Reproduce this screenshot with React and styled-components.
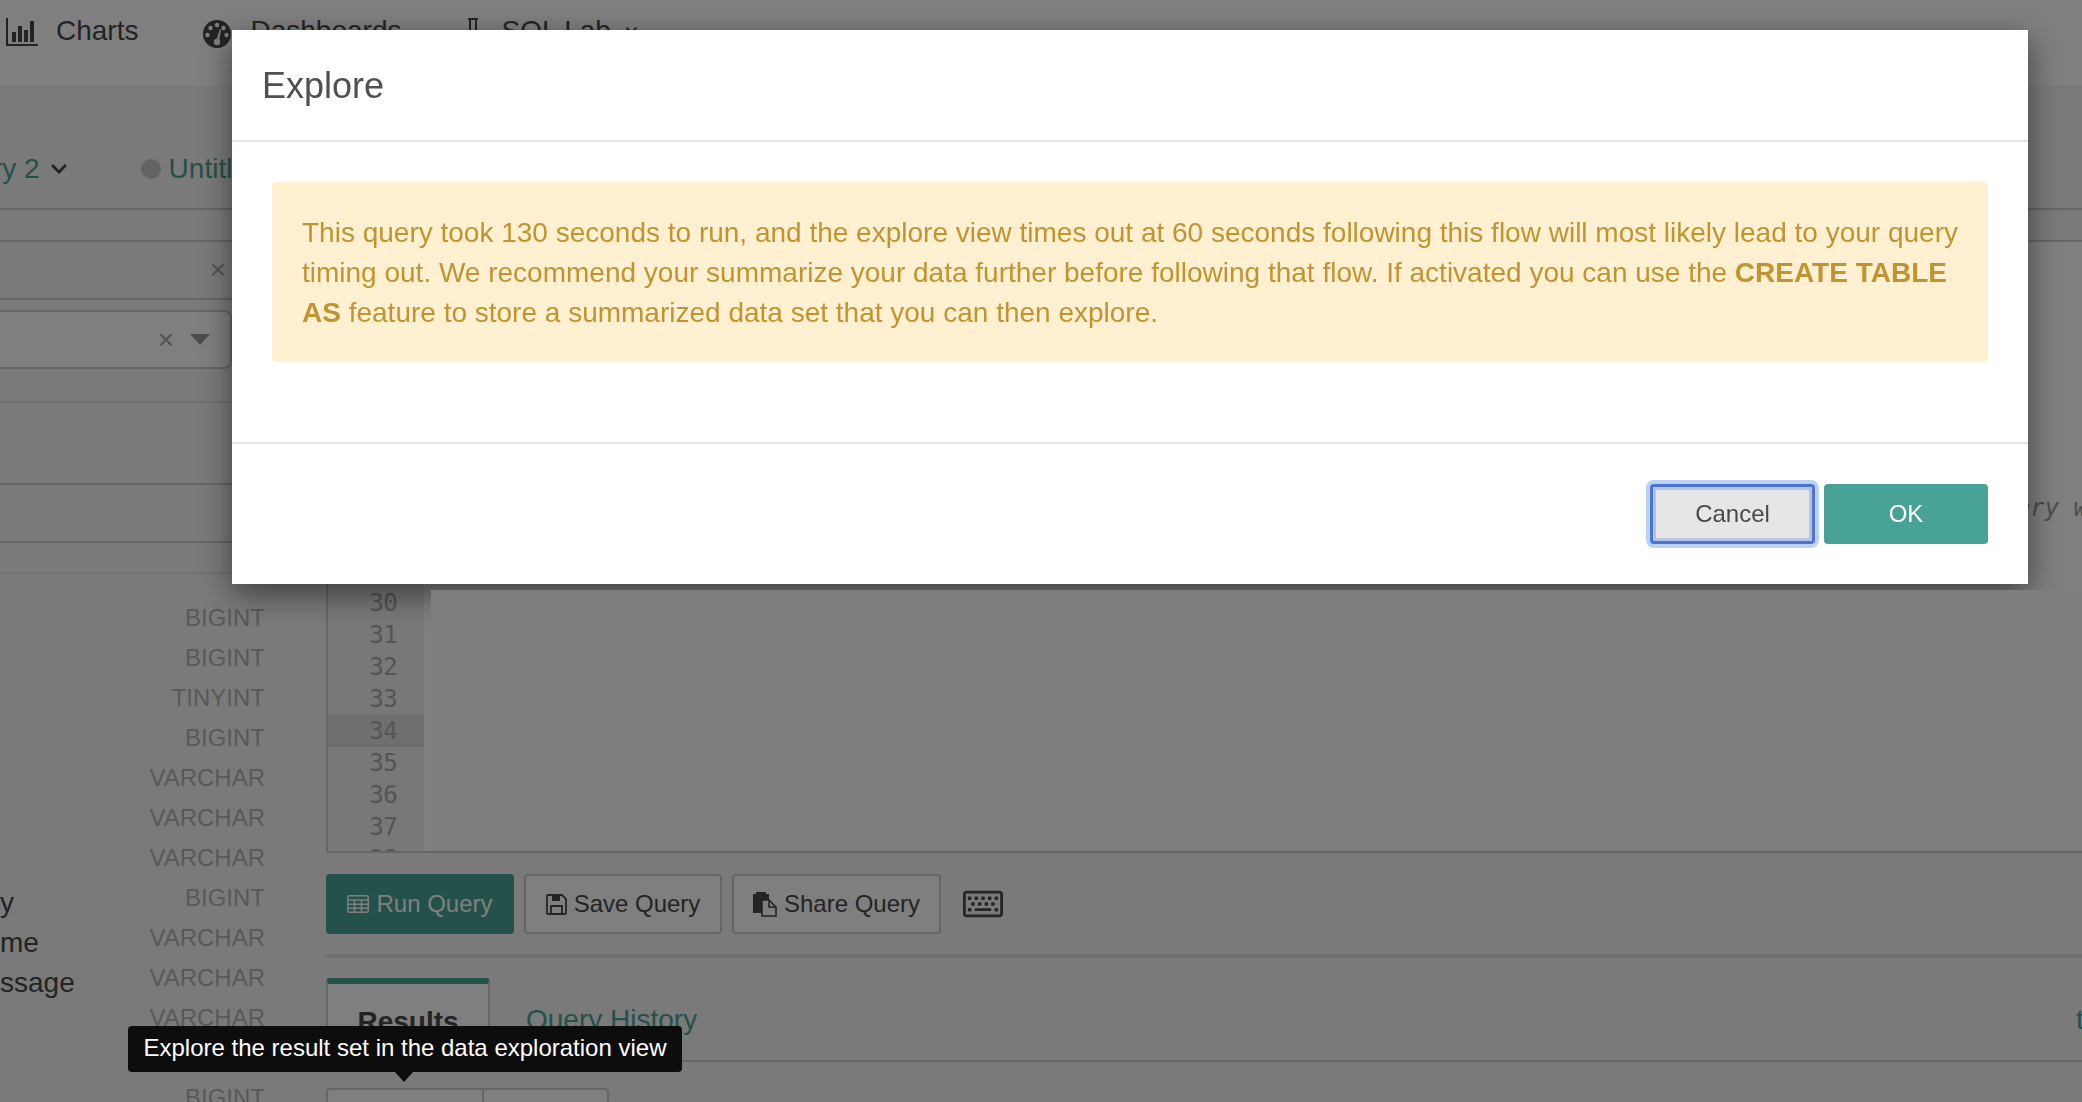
import React from "react";
import styled, { createGlobalStyle } from "styled-components";
import { FaRegKeyboard, FaChevronDown } from "react-icons/fa";

const GlobalStyle = createGlobalStyle`
  html, body {
    margin: 0;
    padding: 0;
    height: 100%;
    overflow: hidden;
    background: #fff;
    font-family: "Liberation Sans", Arial, sans-serif;
    color: #484848;
  }
  * { box-sizing: border-box; }
`;

const teal = "#48a295";

const Page = styled.div`
  width: 2082px;
  height: 1102px;
  overflow: hidden;
  display: flex;
  flex-direction: column;
  background: #fff;
`;

const Nav = styled.nav`
  height: 86px;
  flex: none;
  display: flex;
  background: #fff;
  padding: 15px 0 0 6px;
  font-size: 28px;
`;

const NavItem = styled.div`
  display: flex;
  align-items: flex-start;
  gap: ${(p) => p.$inner}px;
  margin-right: ${(p) => p.$gap}px;
  line-height: 32px;
  color: #484848;
  svg { flex: none; }
`;

const NavChevron = styled(FaChevronDown)`
  font-size: 13px;
  margin: 9px 0 0 -2px;
`;

const TabBar = styled.div`
  height: 124px;
  flex: none;
  display: flex;
  align-items: center;
  background: #f5f5f5;
  border-bottom: 2px solid #ccc;
  font-size: 28px;
  color: ${teal};
  padding-top: 44px;
`;

const QueryTab = styled.div`
  display: flex;
  align-items: center;
  gap: 10px;
  margin-right: ${(p) => p.$right || 0}px;
  margin-left: ${(p) => p.$shift || 0}px;
  white-space: nowrap;
  svg { font-size: 18px; color: #484848; }
`;

const Dot = styled.span`
  width: 20px;
  height: 20px;
  flex: none;
  border-radius: 50%;
  background: #c8c8c8;
`;

const Body = styled.div`
  flex: 1;
  display: flex;
  min-height: 0;
  background: #f5f5f5;
`;

const Sidebar = styled.aside`
  width: 326px;
  flex: none;
  display: flex;
  flex-direction: column;
`;

const FieldLine = styled.div`
  height: ${(p) => p.$h}px;
  flex: none;
  border-bottom: 2px solid ${(p) => (p.$faint ? "#e2e2e2" : "#ccc")};
  display: flex;
  align-items: center;
  justify-content: flex-end;
  padding-right: 100px;
  color: #a8a8a8;
  font-size: 28px;
`;

const SelectBox = styled.div`
  width: 232px;
  height: 59px;
  flex: none;
  margin-top: 10px;
  border: 2px solid #ccc;
  border-left: 0;
  border-radius: 0 8px 8px 0;
  background: #fff;
  display: flex;
  align-items: center;
  justify-content: flex-end;
  gap: 16px;
  padding-right: 20px;
  color: #a8a8a8;
  font-size: 28px;
`;

const Caret = styled.span`
  width: 0;
  height: 0;
  border-style: solid;
  border-width: 11px 10px 0;
  border-color: #999 transparent transparent;
`;

const ColumnGrid = styled.div`
  display: grid;
  grid-template-columns: 265px;
  grid-auto-rows: 40px;
  margin-top: 24px;
`;

const ColumnRow = styled.div`
  display: flex;
  justify-content: space-between;
  align-items: center;
  white-space: nowrap;
`;

const ColumnName = styled.span`
  font-size: 28px;
  color: #484848;
  position: relative;
  top: 5px;
`;

const ColumnType = styled.span`
  font-size: 24px;
  color: #b3b3b3;
`;

const Main = styled.main`
  flex: 1;
  min-width: 0;
  display: flex;
  flex-direction: column;
`;

const Editor = styled.div`
  height: 613px;
  flex: none;
  margin-top: 30px;
  border: 2px solid #ccc;
  border-right: 0;
  background: #fff;
  display: flex;
  overflow: hidden;
  position: relative;
`;

const Gutter = styled.div`
  width: 96px;
  flex: none;
  background: #f0f0f0;
  padding-top: 345px;
`;

const LineNumber = styled.div`
  height: 32px;
  line-height: 32px;
  text-align: right;
  padding-right: 27px;
  font-family: "DejaVu Sans Mono", monospace;
  font-size: 24px;
  letter-spacing: -0.6px;
  color: #aaa;
  background: ${(p) => (p.$active ? "#dedede" : "transparent")};
`;

const Comment = styled.span`
  position: absolute;
  right: -6px;
  top: 252px;
  font-family: "DejaVu Sans Mono", monospace;
  font-style: italic;
  font-size: 24px;
  color: #999;
  white-space: nowrap;
`;

const Toolbar = styled.div`
  height: 60px;
  flex: none;
  margin-top: 21px;
  display: flex;
  align-items: center;
  gap: 10px;
`;

const ToolButton = styled.button`
  height: 60px;
  width: ${(p) => p.$w}px;
  flex: none;
  border: 2px solid ${(p) => (p.$primary ? teal : "#ccc")};
  border-radius: 4px;
  background: ${(p) => (p.$primary ? teal : "#fff")};
  color: ${(p) => (p.$primary ? "#fff" : "#484848")};
  font: 24px "Liberation Sans", Arial, sans-serif;
  display: flex;
  align-items: center;
  justify-content: center;
  gap: 7px;
  padding: 0;
`;

const KeyboardIcon = styled(FaRegKeyboard)`
  font-size: 40px;
  color: #484848;
  margin-left: 12px;
`;

const HeavyRule = styled.div`
  height: 4px;
  flex: none;
  margin-top: 20px;
  background: #e0e0e0;
`;

const ResultTabs = styled.div`
  height: 84px;
  flex: none;
  margin-top: 20px;
  display: flex;
  justify-content: space-between;
  border-bottom: 2px solid #ccc;
`;

const ResultTabGroup = styled.div`
  display: flex;
  gap: 36px;
`;

const ActiveTab = styled.div`
  width: 164px;
  height: 84px;
  border: 2px solid #ccc;
  border-top: 6px solid ${teal};
  border-bottom: 0;
  border-radius: 4px 4px 0 0;
  background: #fff;
  text-align: center;
  padding-top: 22px;
  font-size: 28px;
  font-weight: bold;
  color: #484848;
`;

const TabLink = styled.div`
  font-size: 28px;
  line-height: 32px;
  color: ${teal};
  padding-top: 26px;
  white-space: nowrap;
  overflow: hidden;
`;

const ClippedLink = styled(TabLink)`
  width: 6px;
`;

const ResultButtons = styled.div`
  display: flex;
  width: 283px;
  height: 30px;
  margin-top: 26px;
  border: 2px solid #ccc;
  border-bottom: 0;
  border-radius: 4px 4px 0 0;
  background: #fff;
`;

const ResultButton = styled.div`
  width: 156px;
  border-right: 2px solid #ccc;
`;

const Backdrop = styled.div`
  position: fixed;
  inset: 0;
  background: rgba(0, 0, 0, 0.5);
`;

const Modal = styled.div`
  position: fixed;
  left: 232px;
  top: 30px;
  width: 1796px;
  height: 554px;
  background: #fff;
  box-shadow: 0 10px 30px rgba(0, 0, 0, 0.5);
  display: flex;
  flex-direction: column;
`;

/* the editor text layer paints over the modal shadow in the reference */
const ShadowPatch = styled.div`
  position: fixed;
  left: 431px;
  right: 0;
  top: 590px;
  height: 260px;
  background: #7e7e7e;
`;

const ModalHeader = styled.header`
  height: 112px;
  flex: none;
  padding: 2px 30px 0;
  border-bottom: 2px solid #e5e5e5;
  display: flex;
  align-items: center;
`;

const ModalTitle = styled.h4`
  margin: 0;
  font-size: 36px;
  font-weight: normal;
  color: #505050;
`;

const ModalBody = styled.div`
  flex: 1;
  padding: 40px;
`;

const Alert = styled.div`
  height: 180px;
  padding: 31px 30px 0;
  border-radius: 4px;
  background: #fef0d0;
  color: #c29431;
  font-size: 28px;
  line-height: 40px;
`;

const ModalFooter = styled.footer`
  height: 142px;
  flex: none;
  padding: 40px;
  border-top: 2px solid #e5e5e5;
  display: flex;
  justify-content: flex-end;
  gap: 9px;
`;

const CancelButton = styled.button`
  width: 165px;
  height: 60px;
  border: 3px solid #4a76cf;
  box-shadow: 0 0 0 4px #bcd0f8, inset 0 0 0 3px #b4c4e4;
  border-radius: 4px;
  background: #e6e6e6;
  color: #484848;
  font: 24px "Liberation Sans", Arial, sans-serif;
  padding: 0;
`;

const OkButton = styled.button`
  width: 164px;
  height: 60px;
  border: 0;
  border-radius: 4px;
  background: ${teal};
  color: #fff;
  font: 24px "Liberation Sans", Arial, sans-serif;
  padding: 0;
`;

const Tooltip = styled.div`
  position: fixed;
  left: 128px;
  top: 1026px;
  width: 554px;
  height: 46px;
  background: #0d0d0d;
  border-radius: 4px;
  color: #fff;
  font-size: 24px;
  line-height: 44px;
  text-align: center;
  white-space: nowrap;

  &::after {
    content: "";
    position: absolute;
    left: 267px;
    top: 46px;
    border-style: solid;
    border-width: 10px 9px 0;
    border-color: #0d0d0d transparent transparent;
  }
`;

function ChartIcon() {
  return (
    <svg width="32" height="28" viewBox="0 0 32 28" style={{ marginTop: 3 }} fill="currentColor">
      <rect x="0" y="0" width="2" height="28" />
      <rect x="0" y="26" width="32" height="2" />
      <rect x="6" y="14" width="4" height="10" />
      <rect x="12" y="8" width="4" height="16" />
      <rect x="18" y="12" width="4" height="12" />
      <rect x="24" y="3" width="4" height="21" />
    </svg>
  );
}

function DashboardIcon() {
  return (
    <svg width="28" height="28" viewBox="0 0 28 28" style={{ marginTop: 5 }}>
      <circle cx="14" cy="14" r="14" fill="currentColor" />
      <g fill="#fff">
        <circle cx="14" cy="5" r="2.2" />
        <circle cx="7.5" cy="8" r="2.2" />
        <circle cx="20.5" cy="8" r="2.2" />
        <circle cx="4.5" cy="15" r="2.2" />
        <circle cx="23.5" cy="15" r="2.2" />
        <path d="M13 21 L17 9 L18 9.4 L16 22 Z" />
        <circle cx="14" cy="22" r="3.2" />
      </g>
    </svg>
  );
}

function FlaskIcon() {
  return (
    <svg width="24" height="30" viewBox="0 0 24 30" style={{ marginTop: 3 }} fill="none" stroke="currentColor" strokeWidth="2">
      <path d="M7 1 H17" />
      <path d="M9 1 V11 L4 25 Q3.5 28 6 28 H18 Q20.5 28 20 25 L15 11 V1" />
      <path d="M7 19 H17" />
    </svg>
  );
}

function GridIcon() {
  return (
    <svg width="22" height="18" viewBox="0 0 22 18" fill="none" stroke="currentColor" strokeWidth="1.5">
      <rect x="0.75" y="0.75" width="20.5" height="16.5" rx="1.5" />
      <path d="M0.75 5 H21.25 M0.75 9.2 H21.25 M0.75 13.2 H21.25 M7.5 5 V17.25 M14.5 5 V17.25" />
    </svg>
  );
}

function SaveIcon() {
  return (
    <svg width="21" height="21" viewBox="0 0 21 21" fill="none" stroke="currentColor" strokeWidth="1.8">
      <path d="M1 2 Q1 1 2 1 H16 L20 5 V19 Q20 20 19 20 H2 Q1 20 1 19 Z" />
      <path d="M5 20 V12 H16 V20" />
      <path d="M6 1 V7 H14 V1 Z" fill="currentColor" stroke="none" />
    </svg>
  );
}

function ShareIcon() {
  return (
    <svg width="24" height="25" viewBox="0 0 24 25" fill="currentColor">
      <rect x="0" y="2" width="16" height="19" />
      <rect x="3" y="0" width="10" height="2" />
      <path d="M9 8 H16 L23 15 V24 H9 Z" fill="#fff" stroke="currentColor" strokeWidth="1.6" />
      <path d="M16 8 V15 H23" fill="none" stroke="currentColor" strokeWidth="1.6" />
    </svg>
  );
}

const columns = [
  ["", "BIGINT"],
  ["", "BIGINT"],
  ["", "TINYINT"],
  ["", "BIGINT"],
  ["", "VARCHAR"],
  ["", "VARCHAR"],
  ["", "VARCHAR"],
  ["y", "BIGINT"],
  ["me", "VARCHAR"],
  ["ssage", "VARCHAR"],
  ["", "VARCHAR"],
  ["", "BIGINT"],
  ["", "BIGINT"],
];

const lineNumbers = [30, 31, 32, 33, 34, 35, 36, 37, 38];

export default function App() {
  return (
    <>
      <GlobalStyle />
      <Page>
        <Nav>
          <NavItem $gap={65} $inner={18}><ChartIcon />Charts</NavItem>
          <NavItem $gap={60} $inner={19}><DashboardIcon />Dashboards</NavItem>
          <NavItem $gap={0} $inner={16}><FlaskIcon />SQL Lab <NavChevron /></NavItem>
        </Nav>
        <TabBar>
          <QueryTab $shift={-60} $right={73}>Query 2 <FaChevronDown /></QueryTab>
          <Dot />
          <QueryTab $shift={8}>Untitled Query</QueryTab>
        </TabBar>
        <Body>
          <Sidebar>
            <FieldLine $h={32} />
            <FieldLine $h={58}>×</FieldLine>
            <SelectBox>×<Caret /></SelectBox>
            <FieldLine $h={34} $faint />
            <FieldLine $h={82} />
            <FieldLine $h={58} />
            <FieldLine $h={31} $faint />
            <ColumnGrid>
              {columns.map(([name, type], i) => (
                <ColumnRow key={i}>
                  <ColumnName>{name}</ColumnName>
                  <ColumnType>{type}</ColumnType>
                </ColumnRow>
              ))}
            </ColumnGrid>
          </Sidebar>
          <Main>
            <Editor>
              <Gutter>
                {lineNumbers.map((n) => (
                  <LineNumber key={n} $active={n === 34}>{n}</LineNumber>
                ))}
              </Gutter>
              <Comment>query w</Comment>
            </Editor>
            <Toolbar>
              <ToolButton $primary $w={188}><GridIcon />Run Query</ToolButton>
              <ToolButton $w={198}><SaveIcon />Save Query</ToolButton>
              <ToolButton $w={209}><ShareIcon />Share Query</ToolButton>
              <KeyboardIcon />
            </Toolbar>
            <HeavyRule />
            <ResultTabs>
              <ResultTabGroup>
                <ActiveTab>Results</ActiveTab>
                <TabLink>Query History</TabLink>
              </ResultTabGroup>
              <ClippedLink>t</ClippedLink>
            </ResultTabs>
            <ResultButtons>
              <ResultButton />
            </ResultButtons>
          </Main>
        </Body>
      </Page>
      <Backdrop />
      <Modal>
        <ModalHeader>
          <ModalTitle>Explore</ModalTitle>
        </ModalHeader>
        <ModalBody>
          <Alert>
            This query took 130 seconds to run, and the explore view times out at 60 seconds following this flow will most likely lead to your query timing out. We recommend your summarize your data further before following that flow. If activated you can use the <strong>CREATE TABLE AS</strong> feature to store a summarized data set that you can then explore.
          </Alert>
        </ModalBody>
        <ModalFooter>
          <CancelButton>Cancel</CancelButton>
          <OkButton>OK</OkButton>
        </ModalFooter>
      </Modal>
      <ShadowPatch />
      <Tooltip>Explore the result set in the data exploration view</Tooltip>
    </>
  );
}
